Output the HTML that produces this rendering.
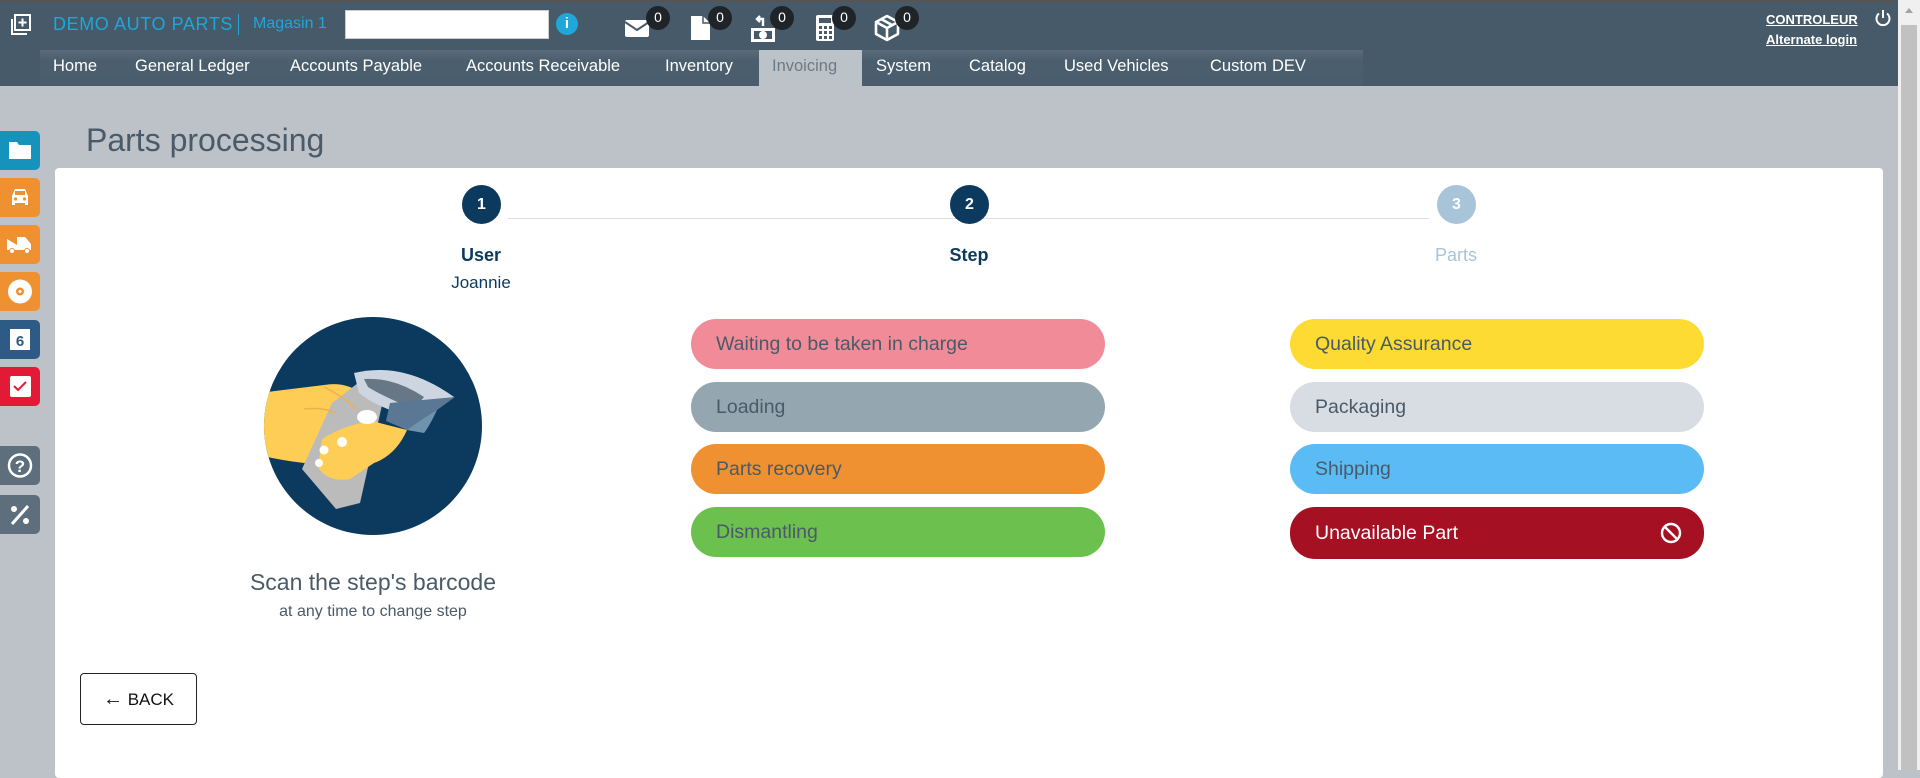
<!DOCTYPE html>
<html><head><meta charset="utf-8">
<style>
*{box-sizing:border-box;margin:0;padding:0}
body{width:1920px;height:770px;overflow:hidden;background:#bcc2c7;font-family:"Liberation Sans",sans-serif;position:relative}
.hdr{position:absolute;left:0;top:0;width:1898px;height:86px;background:#465a69;border-top:2px solid #555}
.nav{position:absolute;left:40px;top:50px;width:1323px;height:36px;background:linear-gradient(#5a6b7a,#4b5e6e 30%,#4a5d6e)}
.nv{position:absolute;top:57px;color:#fff;font-size:16.5px;white-space:nowrap}
.inv{position:absolute;left:759px;top:50px;width:103px;height:36px;background:#bcc3c8}
.badge{position:absolute;width:24px;height:24px;border-radius:50%;background:#1f2429;color:#fff;font-size:14px;text-align:center;line-height:22px}
.sb{position:absolute;left:0;width:40px;height:39px;border-radius:0 5px 5px 0}
.card{position:absolute;left:55px;top:168px;width:1828px;height:610px;background:#fff;border-radius:4px}
.circ{position:absolute;width:39px;height:39px;border-radius:50%;color:#fff;font-weight:bold;font-size:16px;text-align:center;line-height:39px}
.lbl{position:absolute;width:200px;text-align:center;font-size:18px}
.btn{position:absolute;width:414px;height:50px;border-radius:25px;font-size:19.5px;color:#4a5a68;padding-left:25px;line-height:50px;white-space:nowrap}
.scroll{position:absolute;left:1898px;top:0;width:22px;height:770px;background:#f0f0f0}
</style></head><body>
<div class="hdr"></div>
<svg style="position:absolute;left:10px;top:14px" width="22" height="22" viewBox="0 0 22 22"><rect x="5" y="1" width="15" height="15" fill="none" stroke="#fff" stroke-width="2"/><path d="M2 5v15h15" fill="none" stroke="#fff" stroke-width="2"/><path d="M12.5 4.5v8M8.5 8.5h8" stroke="#fff" stroke-width="2"/></svg>
<div style="position:absolute;left:53px;top:14px;color:#1ea7d8;font-size:18px;letter-spacing:0.6px;white-space:nowrap">DEMO AUTO PARTS</div>
<div style="position:absolute;left:238px;top:14px;width:1px;height:21px;background:#1ea7d8"></div>
<div style="position:absolute;left:253px;top:15px;color:#1ea7d8;font-size:16px;white-space:nowrap">Magasin 1</div>
<div style="position:absolute;left:345px;top:10px;width:204px;height:29px;background:#fff;border:1px solid #ccc"></div>
<div style="position:absolute;left:556px;top:13px;width:22px;height:22px;border-radius:50%;background:#1ea7d8;color:#fff;font-weight:bold;font-size:15px;text-align:center;line-height:22px">i</div>
<svg style="position:absolute;left:624px;top:17px" width="26" height="22" viewBox="0 0 26 22"><rect x="1" y="3" width="24" height="17" rx="2" fill="#fff"/><path d="M1 5l12 8 12-8" fill="none" stroke="#465a69" stroke-width="2"/></svg>
<svg style="position:absolute;left:689px;top:14px" width="22" height="28" viewBox="0 0 22 28"><path d="M2 2h12l7 7v17H2z" fill="#fff"/><path d="M14 2v7h7" fill="none" stroke="#465a69" stroke-width="1.5"/></svg>
<svg style="position:absolute;left:750px;top:14px" width="26" height="30" viewBox="0 0 26 30"><path d="M13 12V5H7M10 2L7 5l3 3" fill="none" stroke="#fff" stroke-width="2.4"/><rect x="1" y="14" width="24" height="14" fill="#fff"/><rect x="4" y="17" width="18" height="8" fill="#465a69"/><circle cx="13" cy="21" r="4" fill="#fff"/></svg>
<svg style="position:absolute;left:815px;top:14px" width="20" height="28" viewBox="0 0 20 28"><rect x="1" y="1" width="18" height="26" rx="2" fill="#fff"/><rect x="4" y="4" width="12" height="5" fill="#465a69"/><g fill="#465a69"><rect x="4" y="12" width="3" height="3"/><rect x="9" y="12" width="3" height="3"/><rect x="14" y="12" width="3" height="3"/><rect x="4" y="17" width="3" height="3"/><rect x="9" y="17" width="3" height="3"/><rect x="14" y="17" width="3" height="3"/><rect x="4" y="22" width="3" height="3"/><rect x="9" y="22" width="3" height="3"/><rect x="14" y="22" width="3" height="3"/></g></svg>
<svg style="position:absolute;left:874px;top:14px" width="26" height="28" viewBox="0 0 26 28"><path d="M13 2l11 6v12l-11 6-11-6V8z M2 8l11 6 11-6 M13 14v12 M7 5l11 6" fill="none" stroke="#fff" stroke-width="2.6" stroke-linejoin="round"/></svg>
<div class="badge" style="left:646px;top:6px">0</div>
<div class="badge" style="left:708px;top:6px">0</div>
<div class="badge" style="left:770px;top:6px">0</div>
<div class="badge" style="left:832px;top:6px">0</div>
<div class="badge" style="left:895px;top:6px">0</div>
<div style="position:absolute;left:1766px;top:12px;color:#fff;font-size:13px;font-weight:bold;text-decoration:underline">CONTROLEUR</div>
<div style="position:absolute;left:1766px;top:32px;color:#fff;font-size:13px;font-weight:bold;text-decoration:underline;white-space:nowrap">Alternate login</div>
<svg style="position:absolute;left:1874px;top:9px" width="18" height="18" viewBox="0 0 18 18"><path d="M5 4.5a6.5 6.5 0 1 0 8 0" fill="none" stroke="#fff" stroke-width="2"/><path d="M9 1v8" stroke="#fff" stroke-width="2"/></svg>
<div class="scroll"><div style="position:absolute;left:3px;top:25px;width:16px;height:745px;background:#c1c1c1"></div><div style="position:absolute;left:7px;top:8px;width:0;height:0;border-left:4px solid transparent;border-right:4px solid transparent;border-bottom:5px solid #a3a3a3"></div></div>
<div class="nav"></div>
<div class="inv"></div>
<span class="nv" style="left:53px">Home</span>
<span class="nv" style="left:135px">General Ledger</span>
<span class="nv" style="left:290px">Accounts Payable</span>
<span class="nv" style="left:466px">Accounts Receivable</span>
<span class="nv" style="left:665px">Inventory</span>
<span class="nv" style="left:772px;color:#6b7a86">Invoicing</span>
<span class="nv" style="left:876px">System</span>
<span class="nv" style="left:969px">Catalog</span>
<span class="nv" style="left:1064px">Used Vehicles</span>
<span class="nv" style="left:1210px">Custom</span>
<span class="nv" style="left:1272px">DEV</span>
<div class="sb" style="top:131px;background:#1593bd"><svg width="40" height="39" viewBox="0 0 40 39"><path d="M9 11h8l2 3h12v14H9z" fill="#fff"/></svg></div>
<div class="sb" style="top:178px;background:#ef9130"><svg width="40" height="39" viewBox="0 0 40 39"><path d="M12 18l3-7h10l3 7v9h-3v-2H15v2h-3z" fill="#fff"/><circle cx="15.5" cy="21" r="1.6" fill="#ef9130"/><circle cx="24.5" cy="21" r="1.6" fill="#ef9130"/><rect x="15" y="13" width="10" height="4" fill="#ef9130"/></svg></div>
<div class="sb" style="top:225px;background:#ef9130"><svg width="40" height="39" viewBox="0 0 40 39"><path d="M7 14l10 6v-8h8l6 7v6H7z" fill="#fff"/><circle cx="12" cy="26" r="2.5" fill="#fff" stroke="#ef9130"/><circle cx="27" cy="26" r="2.5" fill="#fff" stroke="#ef9130"/></svg></div>
<div class="sb" style="top:272px;background:#ef9130"><svg width="40" height="39" viewBox="0 0 40 39"><circle cx="20" cy="19.5" r="12" fill="#fff"/><circle cx="20" cy="19.5" r="4" fill="#ef9130"/><circle cx="20" cy="19.5" r="1.5" fill="#fff"/></svg></div>
<div class="sb" style="top:320px;background:#2e5a86"><svg width="40" height="39" viewBox="0 0 40 39"><rect x="10" y="9" width="20" height="21" fill="#fff"/><text x="20" y="26" fill="#2e5a86" font-size="15" font-weight="bold" text-anchor="middle" font-family="Liberation Sans">6</text></svg></div>
<div class="sb" style="top:367px;background:#e31a35"><svg width="40" height="39" viewBox="0 0 40 39"><rect x="10" y="9" width="21" height="21" rx="2" fill="#fff"/><path d="M14 19l4 4 8-8" fill="none" stroke="#e31a35" stroke-width="2"/></svg></div>
<div class="sb" style="top:446px;background:#5d6f7d"><svg width="40" height="39" viewBox="0 0 40 39"><circle cx="20" cy="19.5" r="11" fill="none" stroke="#fff" stroke-width="2.5"/><text x="20" y="26" fill="#fff" font-size="17" font-weight="bold" text-anchor="middle" font-family="Liberation Sans">?</text></svg></div>
<div class="sb" style="top:495px;background:#5d6f7d"><svg width="40" height="39" viewBox="0 0 40 39"><path d="M12 29L28 11" stroke="#fff" stroke-width="3"/><circle cx="14" cy="14" r="3" fill="#fff"/><circle cx="26" cy="26" r="3" fill="#fff"/></svg></div>
<div style="position:absolute;left:86px;top:122px;color:#4a5a68;font-size:32px;white-space:nowrap">Parts processing</div>
<div class="card"></div>
<div style="position:absolute;left:508px;top:218px;width:921px;height:1px;background:#dcdfe2"></div>
<div class="circ" style="left:462px;top:185px;background:#0c3a5e">1</div>
<div class="circ" style="left:950px;top:185px;background:#0c3a5e">2</div>
<div class="circ" style="left:1437px;top:185px;background:#a8c4d8">3</div>
<div class="lbl" style="left:381px;top:245px;font-weight:bold;color:#0c3a5e">User</div>
<div class="lbl" style="left:381px;top:273px;font-size:17px;color:#0c3a5e">Joannie</div>
<div class="lbl" style="left:869px;top:245px;font-weight:bold;color:#0c3a5e">Step</div>
<div class="lbl" style="left:1356px;top:245px;color:#a8c4d8">Parts</div>
<svg style="position:absolute;left:264px;top:317px" width="218" height="218" viewBox="0 0 218 218">
<defs><clipPath id="c"><circle cx="109" cy="109" r="109"/></clipPath></defs>
<circle cx="109" cy="109" r="109" fill="#0c3a5e"/>
<g clip-path="url(#c)">
<path d="M-5 76 L60 68 Q82 64 100 78 L115 96 L88 112 L62 140 L40 146 Q15 143 -5 138 Z" fill="#fdcd56"/>
<path d="M94 66 L118 88 L96 186 L72 192 L38 152 L68 86 Z" fill="#bbbbbb"/>
<path d="M90 56 Q140 44 190 80 L150 100 Q115 92 95 76 Z" fill="#ccd5e0"/>
<path d="M100 62 Q130 60 160 80 L150 92 Q120 80 104 70 Z" fill="#3d4e5e" opacity=".7"/>
<path d="M126 86 L191 80 L173 93 Q160 104 143 113 L122 104 Z" fill="#5a7893"/>
<path d="M173 93 Q165 110 160 116 L143 113 Q158 102 173 93 Z" fill="#6f92ad"/>
<path d="M58 122 Q80 108 108 104 L143 113 Q132 138 110 146 L86 162 Q64 166 54 150 Z" fill="#fdcd56"/>
<path d="M60 70 Q80 80 92 92 M40 92 Q60 90 72 96" fill="none" stroke="#f0b04a" stroke-width="1.5"/>
<ellipse cx="103" cy="100" rx="10" ry="7" fill="#fff"/>
<circle cx="78" cy="125" r="5" fill="#fff"/><circle cx="60" cy="133" r="4.5" fill="#fff"/><circle cx="55" cy="146" r="4" fill="#fff"/>
</g>
</svg>
<div style="position:absolute;left:173px;top:569px;width:400px;text-align:center;color:#4a5a68;font-size:23px">Scan the step's barcode</div>
<div style="position:absolute;left:173px;top:603px;width:400px;text-align:center;color:#4a5a68;font-size:16px">at any time to change step</div>
<div class="btn" style="left:691px;top:319px;background:#f28b98">Waiting to be taken in charge</div>
<div class="btn" style="left:691px;top:382px;background:#94a6af">Loading</div>
<div class="btn" style="left:691px;top:444px;background:#ef9130">Parts recovery</div>
<div class="btn" style="left:691px;top:507px;background:#6cc04e">Dismantling</div>
<div class="btn" style="left:1290px;top:319px;background:#fddb33">Quality Assurance</div>
<div class="btn" style="left:1290px;top:382px;background:#d7dde3">Packaging</div>
<div class="btn" style="left:1290px;top:444px;background:#5bbcf5">Shipping</div>
<div class="btn" style="left:1290px;top:507px;height:52px;line-height:52px;background:#a51122;color:#fff">Unavailable Part
<svg style="position:absolute;right:22px;top:15px" width="22" height="22" viewBox="0 0 22 22"><circle cx="11" cy="11" r="9" fill="none" stroke="#fff" stroke-width="2.4"/><path d="M5 5l12 12" stroke="#fff" stroke-width="2.4"/></svg></div>
<div style="position:absolute;left:80px;top:673px;width:117px;height:52px;border:1px solid #222;border-radius:4px;font-size:17px;color:#111;line-height:50px;padding-left:22px;white-space:nowrap"><span style="font-size:20px">←</span> BACK</div>
</body></html>
